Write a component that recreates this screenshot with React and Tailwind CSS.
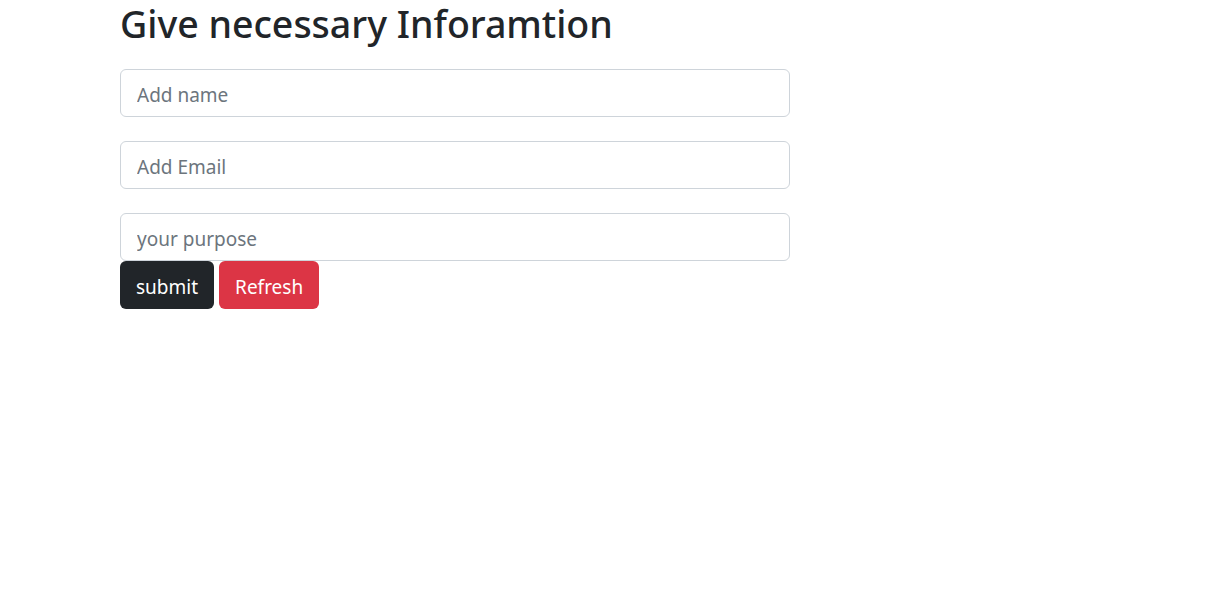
export default function App() {
  return (
    <div className="min-h-screen bg-white font-['Noto_Sans','Open_Sans',sans-serif] text-[#212529]">
      <div className="ml-[120px] w-[670px]">
        <h1 className="text-[37.5px] leading-[48px] font-medium mb-[21px]">
          Give necessary Inforamtion
        </h1>
        <form className="flex flex-col">
          <input
            type="text"
            placeholder="Add name"
            className="h-[48px] w-full px-4 pt-1 text-[19px] border border-[#ced4da] rounded-md placeholder:text-[#6c757d] mb-6"
          />
          <input
            type="email"
            placeholder="Add Email"
            className="h-[48px] w-full px-4 pt-1 text-[19px] border border-[#ced4da] rounded-md placeholder:text-[#6c757d] mb-6"
          />
          <input
            type="text"
            placeholder="your purpose"
            className="h-[48px] w-full px-4 pt-1 text-[19px] border border-[#ced4da] rounded-md placeholder:text-[#6c757d]"
          />
          <div className="flex gap-[5px]">
            <button
              type="submit"
              className="h-[48px] px-4 pt-1 text-[19px] text-white bg-[#212529] rounded-md"
            >
              submit
            </button>
            <button
              type="button"
              className="h-[48px] px-4 pt-1 text-[19px] text-white bg-[#dc3545] rounded-md"
            >
              Refresh
            </button>
          </div>
        </form>
      </div>
    </div>
  );
}
